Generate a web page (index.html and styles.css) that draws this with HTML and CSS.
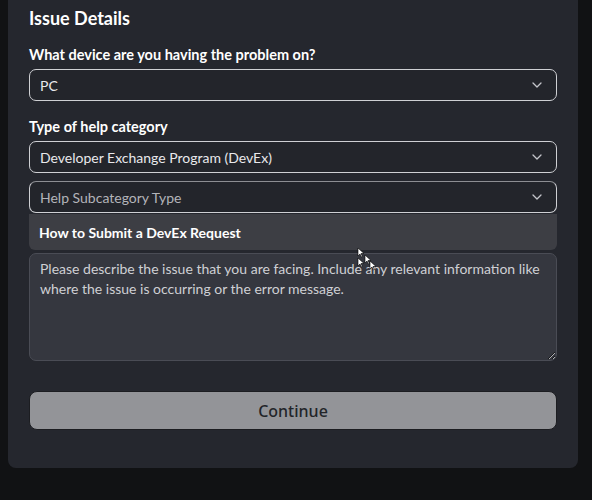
FILE: index.html
```html
<!DOCTYPE html>
<html lang="en">
<head>
<meta charset="utf-8">
<title>Issue Details</title>
<link rel="stylesheet" href="styles.css">
</head>
<body>
<div class="card">
  <h2 class="title">Issue Details</h2>

  <label class="label">What device are you having the problem on?</label>
  <div class="select">
    <span class="value">PC</span>
    <svg class="chev" width="10" height="6" viewBox="0 0 10 6"><path d="M1 1l4 4 4-4" fill="none" stroke="#c4c5ca" stroke-width="1.3" stroke-linecap="round" stroke-linejoin="round"/></svg>
  </div>

  <label class="label">Type of help category</label>
  <div class="select">
    <span class="value">Developer Exchange Program (DevEx)</span>
    <svg class="chev" width="10" height="6" viewBox="0 0 10 6"><path d="M1 1l4 4 4-4" fill="none" stroke="#c4c5ca" stroke-width="1.3" stroke-linecap="round" stroke-linejoin="round"/></svg>
  </div>

  <div class="dropwrap">
    <div class="select sub">
      <span class="placeholder">Help Subcategory Type</span>
      <svg class="chev" width="10" height="6" viewBox="0 0 10 6"><path d="M1 1l4 4 4-4" fill="none" stroke="#c4c5ca" stroke-width="1.3" stroke-linecap="round" stroke-linejoin="round"/></svg>
    </div>
    <div class="menu">
      <div class="option">How to Submit a DevEx Request</div>
    </div>
  </div>

  <textarea class="desc" placeholder="Please describe the issue that you are facing. Include any relevant information like where the issue is occurring or the error message."></textarea>

  <button class="btn">Continue</button>
</div>

<svg class="cursor" width="20" height="26" viewBox="0 0 20 26">
  <path d="M1 1v8l2-2 1.5 3 1-.5L4 6.5h3z" fill="#fff" stroke="#000" stroke-width=".6"/>
  <path d="M1 11v8l2-2 1.5 3 1-.5L4 16.5h3z" fill="#fff" stroke="#000" stroke-width=".6"/>
  <path d="M8 8v8l2-2 1.5 3 1-.5L11 13.5h3z" fill="#fff" stroke="#000" stroke-width=".6"/>
  <path d="M13 14v8l2-2 1.5 3 1-.5L16 19.5h3z" fill="#fff" stroke="#000" stroke-width=".6"/>
</svg>
</body>
</html>
```

FILE: styles.css
```css
* { box-sizing: border-box; }

html, body {
  margin: 0;
  padding: 0;
  background: #111214;
}

body {
  position: relative;
  font-family: Lato, "Noto Sans", sans-serif;
  color: #ffffff;
}

.card {
  margin: 0 14px 0 8px;
  height: 468px;
  background: #25272e;
  border-radius: 0 0 8px 8px;
  padding: 7px 21px 0 21px;
  display: flex;
  flex-direction: column;
}

.title {
  margin: 0;
  font-size: 18px;
  line-height: 22px;
  font-weight: 700;
  color: #ffffff;
}

.label {
  display: block;
  margin-top: 16px;
  font-size: 14.5px;
  line-height: 20px;
  font-weight: 700;
  color: #ffffff;
}

.select {
  margin-top: 4px;
  height: 32px;
  border: 1px solid #cfd0d4;
  border-radius: 7px;
  background: #23252b;
  display: flex;
  align-items: center;
  justify-content: space-between;
  padding: 0 14px 0 10px;
  font-size: 14px;
}

.value { color: #e9e9ec; }

.placeholder { color: #b3b4b9; }

.dropwrap {
  position: relative;
  margin-top: 8px;
}

.select.sub {
  margin-top: 0;
  border-top-color: #8d8e93;
}

.menu {
  position: absolute;
  left: 0;
  right: 0;
  top: 33px;
  background: #3d3e44;
  border-radius: 0 0 6px 6px;
  z-index: 2;
}

.option {
  height: 36px;
  display: flex;
  align-items: center;
  padding: 1px 10px 0;
  font-size: 14px;
  font-weight: 700;
  color: #ffffff;
}

.desc {
  display: block;
  margin-top: 40px;
  width: 100%;
  height: 108px;
  background: #35373f;
  border: 1px solid #4a4c55;
  border-radius: 7px;
  padding: 5px 10px;
  font-family: inherit;
  font-size: 14px;
  line-height: 20px;
  color: #d6d7db;
  resize: vertical;
}

.desc::placeholder { color: #cfd0d4; opacity: 1; }

.btn {
  margin-top: 30px;
  height: 39px;
  width: 100%;
  background: #939498;
  border: 1px solid #1c1d21;
  border-radius: 8px;
  font-family: "Noto Sans", sans-serif;
  font-size: 16px;
  font-weight: 500;
  color: #222428;
}

.cursor {
  position: absolute;
  left: 357px;
  top: 247px;
  z-index: 5;
}
```
